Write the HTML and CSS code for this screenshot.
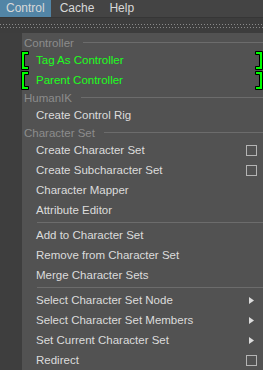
FILE: index.html
```html
<!DOCTYPE html>
<html lang="en">
<head>
    <meta charset="UTF-8">
    <meta name="viewport" content="width=device-width, initial-scale=1.0">
    <title>Control Menu</title>
    <link rel="stylesheet" href="styles.css">
</head>
<body>
    <div class="menubar">
        <span class="menubar-item active">Control</span>
        <span class="menubar-item">Cache</span>
        <span class="menubar-item">Help</span>
    </div>
    <div class="shelf">
        <div class="dots"></div>
        <div class="dots offset"></div>
    </div>
    <div class="main">
        <div class="gutter"></div>
        <div class="menu">
            <div class="section first"><span>Controller</span><div class="rule"></div></div>
            <div class="item green">
                <svg class="bracket" width="8" height="19" viewBox="0 0 8 19"><polygon points="0.5,0.5 7.5,0.5 7.5,3.5 3.5,3.5 3.5,15.5 7.5,15.5 7.5,18.5 0.5,18.5" fill="#00ff00" stroke="#000"/></svg>
                <span class="label">Tag As Controller</span>
                <svg class="bracket right" width="8" height="19" viewBox="0 0 8 19"><polygon points="7.5,0.5 0.5,0.5 0.5,3.5 4.5,3.5 4.5,15.5 0.5,15.5 0.5,18.5 7.5,18.5" fill="#00ff00" stroke="#000"/></svg>
            </div>
            <div class="item green">
                <svg class="bracket" width="8" height="19" viewBox="0 0 8 19"><polygon points="0.5,0.5 7.5,0.5 7.5,3.5 3.5,3.5 3.5,15.5 7.5,15.5 7.5,18.5 0.5,18.5" fill="#00ff00" stroke="#000"/></svg>
                <span class="label">Parent Controller</span>
                <svg class="bracket right" width="8" height="19" viewBox="0 0 8 19"><polygon points="7.5,0.5 0.5,0.5 0.5,3.5 4.5,3.5 4.5,15.5 0.5,15.5 0.5,18.5 7.5,18.5" fill="#00ff00" stroke="#000"/></svg>
            </div>
            <div class="section"><span>HumanIK</span><div class="rule"></div></div>
            <div class="item"><span class="label">Create Control Rig</span></div>
            <div class="section"><span>Character Set</span><div class="rule"></div></div>
            <div class="item"><span class="label">Create Character Set</span><span class="box"></span></div>
            <div class="item"><span class="label">Create Subcharacter Set</span><span class="box"></span></div>
            <div class="item"><span class="label">Character Mapper</span></div>
            <div class="item"><span class="label">Attribute Editor</span></div>
            <div class="divider"></div>
            <div class="item"><span class="label">Add to Character Set</span></div>
            <div class="item"><span class="label">Remove from Character Set</span></div>
            <div class="item"><span class="label">Merge Character Sets</span></div>
            <div class="divider"></div>
            <div class="item"><span class="label">Select Character Set Node</span><svg class="arrow" width="5" height="7" viewBox="0 0 5 7"><polygon points="0,0 5,3.5 0,7" fill="#dcdcdc"/></svg></div>
            <div class="item"><span class="label">Select Character Set Members</span><svg class="arrow" width="5" height="7" viewBox="0 0 5 7"><polygon points="0,0 5,3.5 0,7" fill="#dcdcdc"/></svg></div>
            <div class="item"><span class="label">Set Current Character Set</span><svg class="arrow" width="5" height="7" viewBox="0 0 5 7"><polygon points="0,0 5,3.5 0,7" fill="#dcdcdc"/></svg></div>
            <div class="item"><span class="label">Redirect</span><span class="box"></span></div>
        </div>
    </div>
</body>
</html>
```

FILE: styles.css
```css
body {
    margin: 0;
    background: #3e3e3e;
    font-family: "Liberation Sans", Arial, sans-serif;
    color: #dcdcdc;
    overflow: hidden;
}
.menubar {
    display: flex;
    height: 17px;
    background: #444444;
    font-size: 12px;
}
.menubar-item {
    padding: 0 6px;
    margin-right: 3px;
    line-height: 17px;
    color: #d8d8d8;
}
.menubar-item.active {
    background: #5285a6;
}
.shelf {
    height: 15px;
    border-top: 1px solid #363636;
    background: #3d3d3d;
    padding-top: 6px;
    box-sizing: border-box;
    height: 16px;
}
.dots {
    height: 1px;
    margin-bottom: 2px;
    background: repeating-linear-gradient(to right, #8a8a8a 0 1px, transparent 1px 3px);
}
.dots.offset {
    background-position: 1px 0;
}
.main {
    display: flex;
}
.gutter {
    width: 22px;
    flex: none;
}
.menu {
    flex: 1;
    background: #525252;
    padding-top: 2px;
    font-size: 11.5px;
}
.section {
    display: flex;
    align-items: center;
    height: 15px;
    padding-left: 2px;
    color: #8c8c8c;
}
.section .rule {
    flex: 1;
    height: 1px;
    background: #6c6c6c;
    margin-left: 9px;
}
.item {
    display: flex;
    align-items: center;
    height: 20px;
    padding-left: 14px;
    padding-right: 6px;
}
.item.green {
    color: #1eff1e;
    padding-left: 0;
    padding-right: 0;
}
.bracket {
    display: block;
    margin-left: -1px;
}
.item.green .label {
    margin-left: 7px;
}
.bracket.right {
    margin-left: auto;
}
.box {
    margin-left: auto;
    width: 9px;
    height: 9px;
    border: 1px solid #b4b4b4;
}
.arrow {
    display: block;
    margin-left: auto;
    margin-right: 3px;
}
.divider {
    height: 1px;
    background: #6c6c6c;
    margin: 2px 0 2px 15px;
}
```
